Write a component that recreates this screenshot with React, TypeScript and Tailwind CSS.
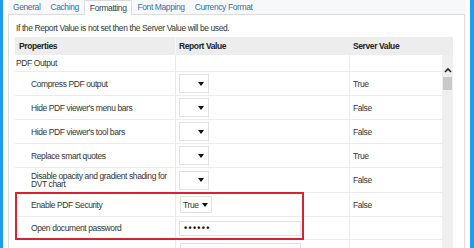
import React from "react";

const rows: { label: string; indent?: boolean; value?: "select" | "true" | "password" | "input" | null; server?: string; h: number; twoLine?: boolean }[] = [
  { label: "PDF Output", value: null, h: 17 },
  { label: "Compress PDF output", indent: true, value: "select", server: "True", h: 24 },
  { label: "Hide PDF viewer's menu bars", indent: true, value: "select", server: "False", h: 24 },
  { label: "Hide PDF viewer's tool bars", indent: true, value: "select", server: "False", h: 24 },
  { label: "Replace smart quotes", indent: true, value: "select", server: "True", h: 24 },
  { label: "Disable opacity and gradient shading for DVT chart", indent: true, value: "select", server: "False", h: 25, twoLine: true },
  { label: "Enable PDF Security", indent: true, value: "true", server: "False", h: 24 },
  { label: "Open document password", indent: true, value: "password", h: 23 },
  { label: "", indent: true, value: "input", h: 24 },
];

function Arrow() {
  return (
    <svg width="6" height="4" viewBox="0 0 6 4" className="shrink-0">
      <path d="M0 0 L6 0 L3 4 Z" fill="#111" />
    </svg>
  );
}

function ValueCell({ kind }: { kind: string | null | undefined }) {
  if (kind === "select")
    return (
      <div className="w-[30px] h-[19px] border border-[#e2e2e2] bg-white flex items-center justify-end pr-[4px]">
        <Arrow />
      </div>
    );
  if (kind === "true")
    return (
      <div className="w-[32px] h-[17px] border border-[#e2e2e2] bg-white flex items-center justify-between pl-[2px] pr-[3px] ml-[1px]">
        <span>True</span>
        <Arrow />
      </div>
    );
  if (kind === "password")
    return (
      <div className="w-[122px] h-[15px] border border-[#e2e2e2] bg-white flex items-center pl-[4px] text-[9px] font-bold tracking-[1.3px] text-[#111]">
        ••••••
      </div>
    );
  if (kind === "input")
    return <div className="w-[121px] h-[15px] border border-[#e2e2e2] bg-white ml-[1px] self-start mt-[3px]" />;
  return null;
}

export default function App() {
  const tabs = ["General", "Caching", "Formatting", "Font Mapping", "Currency Format"];
  return (
    <div className="w-[474px] h-[248px] overflow-hidden bg-white flex text-[8.5px] tracking-[-0.4px] text-[#333] leading-[10px]" style={{ fontFamily: '"Liberation Sans", Arial, sans-serif' }}>
      <div className="w-[3px] shrink-0 bg-[#1c9ef2]" />
      <div className="flex-1 flex flex-col px-[5px] min-h-0">
        <div className="h-[15px] shrink-0 flex items-stretch border-b border-[#dcdcdc] bg-[#f7f8f9]">
          {tabs.map((t) =>
            t === "Formatting" ? (
              <div key={t} className="px-[5px] bg-white border-x border-t border-[#dcdcdc] -mb-px flex items-center text-[#1f3f63]">
                {t}
              </div>
            ) : (
              <div key={t} className="px-[5px] flex items-center text-[#3f6f9f]">
                {t}
              </div>
            )
          )}
        </div>
        <div className="flex-1 min-h-0 border-x border-[#dcdcdc] flex flex-col px-[6px]">
          <div className="shrink-0 pt-[8px] pl-[1px] mb-[4px]">If the Report Value is not set then the Server Value will be used.</div>
          <div className="shrink-0 mr-[5px] h-[18px] bg-[#ededed] flex font-bold text-[#222]">
            <div className="w-[161px] pl-[4px] flex items-center border-r border-[#f6f6f6]">Properties</div>
            <div className="w-[174px] pl-[3px] flex items-center">Report Value</div>
            <div className="flex-1 pl-[3px] flex items-center">Server Value</div>
          </div>
          <div className="mr-[5px] flex flex-1 min-h-0 relative">
            <div className="flex-1 flex flex-col">
              {rows.map((r, i) => (
                <div key={i} className="flex border-b border-[#ececec] shrink-0" style={{ height: r.h }}>
                  <div className={`w-[161px] border-r border-[#ececec] flex items-center ${r.indent ? "pl-[16px]" : "pl-[1px]"}`}>
                    <span className={r.twoLine ? "leading-[8px] w-[140px]" : ""}>{r.label}</span>
                  </div>
                  <div className="w-[174px] border-r border-[#ececec] flex items-center pl-[3px]">
                    <ValueCell kind={r.value} />
                  </div>
                  <div className="flex-1 flex items-center pl-[3px]">{r.server}</div>
                </div>
              ))}
            </div>
            <div className="w-[11px] bg-[#efefef] flex flex-col items-center">
              <svg width="8" height="6" viewBox="0 0 8 6" className="mt-[12px]">
                <path d="M1 5 L4 2 L7 5" fill="none" stroke="#222" strokeWidth="1.6" />
              </svg>
              <div className="w-[9px] h-[13px] bg-[#c9c9c9] mt-[4px]" />
            </div>
            <div className="absolute left-0 top-[137px] w-[289px] h-[48px] border-2 border-[#d52430] pointer-events-none" />
          </div>
        </div>
      </div>
      <div className="w-[4px] shrink-0 bg-[#1c9ef2]" />
    </div>
  );
}
